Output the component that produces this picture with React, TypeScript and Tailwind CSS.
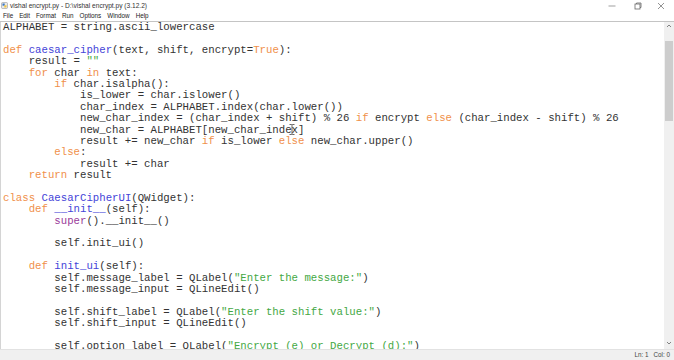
import React from "react";

type Seg = [string, string?];

const K = "k";
const D = "d";
const S = "s";
const B = "b";

const code: Seg[][] = [
  [["ALPHABET = string.ascii_lowercase"]],
  [],
  [["def", K], [" "], ["caesar_cipher", D], ["(text, shift, encrypt="], ["True", K], ["):"]],
  [["    result = "], ['""', S]],
  [["    "], ["for", K], [" char "], ["in", K], [" text:"]],
  [["        "], ["if", K], [" char.isalpha():"]],
  [["            is_lower = char.islower()"]],
  [["            char_index = ALPHABET.index(char.lower())"]],
  [
    ["            new_char_index = (char_index + shift) % 26 "],
    ["if", K],
    [" encrypt "],
    ["else", K],
    [" (char_index - shift) % 26"],
  ],
  [["            new_char = ALPHABET[new_char_index]"]],
  [["            result += new_char "], ["if", K], [" is_lower "], ["else", K], [" new_char.upper()"]],
  [["        "], ["else", K], [":"]],
  [["            result += char"]],
  [["    "], ["return", K], [" result"]],
  [],
  [["class", K], [" "], ["CaesarCipherUI", D], ["(QWidget):"]],
  [["    "], ["def", K], [" "], ["__init__", D], ["(self):"]],
  [["        "], ["super", B], ["().__init__()"]],
  [],
  [["        self.init_ui()"]],
  [],
  [["    "], ["def", K], [" "], ["init_ui", D], ["(self):"]],
  [["        self.message_label = QLabel("], ['"Enter the message:"', S], [")"]],
  [["        self.message_input = QLineEdit()"]],
  [],
  [["        self.shift_label = QLabel("], ['"Enter the shift value:"', S], [")"]],
  [["        self.shift_input = QLineEdit()"]],
  [],
  [["        self.option_label = QLabel("], ['"Encrypt (e) or Decrypt (d):"', S], [")"]],
];

const colors: Record<string, string> = {
  k: "text-[#f0904a]",
  d: "text-[#4444d8]",
  s: "text-[#44a844]",
  b: "text-[#9a3a9a]",
};

const menu = ["File", "Edit", "Format", "Run", "Options", "Window", "Help"];

export default function App() {
  return (
    <div className="w-[674px] h-[360px] flex flex-col bg-white overflow-hidden font-['Liberation_Sans',sans-serif]">
      {/* Title bar */}
      <div className="h-[11px] flex items-center relative">
        <svg width="7" height="7" viewBox="0 0 7 7" className="ml-[1px]">
          <rect x="0.5" y="0.5" width="6" height="6" rx="1" fill="#e8e8e8" stroke="#9a9a9a" strokeWidth="0.6" />
          <rect x="1.5" y="1.5" width="2.2" height="2.2" fill="#3b78c4" />
          <rect x="3.3" y="3.3" width="2.2" height="2.2" fill="#f2c53d" />
        </svg>
        <span className="ml-[2px] text-[6.6px] text-[#333]">vishal encrypt.py - D:\vishal encrypt.py (3.12.2)</span>
        <div className="ml-auto flex items-center">
          <svg width="8" height="8" viewBox="0 0 8 8" className="mr-[18px]">
            <line x1="0.5" y1="4" x2="7.5" y2="4" stroke="#777" strokeWidth="0.7" />
          </svg>
          <svg width="8" height="8" viewBox="0 0 8 8" className="mr-[15px]">
            <rect x="1" y="2" width="5" height="5" fill="none" stroke="#666" strokeWidth="0.8" />
            <path d="M2.5 2 V1 H7 V5.5 H6" fill="none" stroke="#666" strokeWidth="0.8" />
          </svg>
          <svg width="8" height="8" viewBox="0 0 8 8" className="mr-[9px]">
            <path d="M1 1 L7 7 M7 1 L1 7" stroke="#666" strokeWidth="0.7" />
          </svg>
        </div>
      </div>

      {/* Menu bar */}
      <div className="h-[10px] flex items-center gap-[6px] pl-[3px] text-[6.3px] text-[#222]">
        {menu.map((m) => (
          <span key={m}>{m}</span>
        ))}
      </div>

      {/* Editor */}
      <div className="flex-1 flex min-h-0 border-t border-[#c4c4c4] relative">
        <div className="flex-1 overflow-hidden border-l border-[#d4d4d4] pl-[2px] font-['Liberation_Mono',monospace] text-[10.7px] leading-[11.4px] text-[#333] whitespace-pre">
          {code.map((line, i) => (
            <div key={i} className="h-[11.4px]">
              {line.map(([t, k], j) => (
                <span key={j} className={k ? colors[k] : undefined}>
                  {t}
                </span>
              ))}
            </div>
          ))}
        </div>

        {/* Scrollbar */}
        <div className="w-[10px] bg-[#f0f0f0] flex flex-col items-center">
          <svg width="6" height="6" viewBox="0 0 6 6" className="mt-[1px]">
            <path d="M1 4 L3 2 L5 4" fill="none" stroke="#666" strokeWidth="0.8" />
          </svg>
          <div className="mt-[12px] w-[8px] h-[80px] bg-[#cdcdcd]" />
          <div className="flex-1" />
          <svg width="6" height="6" viewBox="0 0 6 6" className="mb-[3px]">
            <path d="M1 2 L3 4 L5 2" fill="none" stroke="#666" strokeWidth="0.8" />
          </svg>
        </div>

        {/* Mouse cursor (I-beam) */}
        <svg width="6" height="11" viewBox="0 0 6 11" className="absolute left-[289px] top-[102px]">
          <path d="M0.5 0.5 H2.5 L3 1 L3.5 0.5 H5.5 M3 1 V10 M0.5 10.5 H2.5 L3 10 L3.5 10.5 H5.5" fill="none" stroke="#222" strokeWidth="0.7" />
        </svg>
      </div>

      {/* Status bar */}
      <div className="h-[11px] bg-[#f0f0f0] border-t border-[#e2e2e2] flex items-center justify-end pr-[4px] gap-[5px] text-[6.3px] text-[#444]">
        <span>Ln: 1</span>
        <span>Col: 0</span>
      </div>
    </div>
  );
}
